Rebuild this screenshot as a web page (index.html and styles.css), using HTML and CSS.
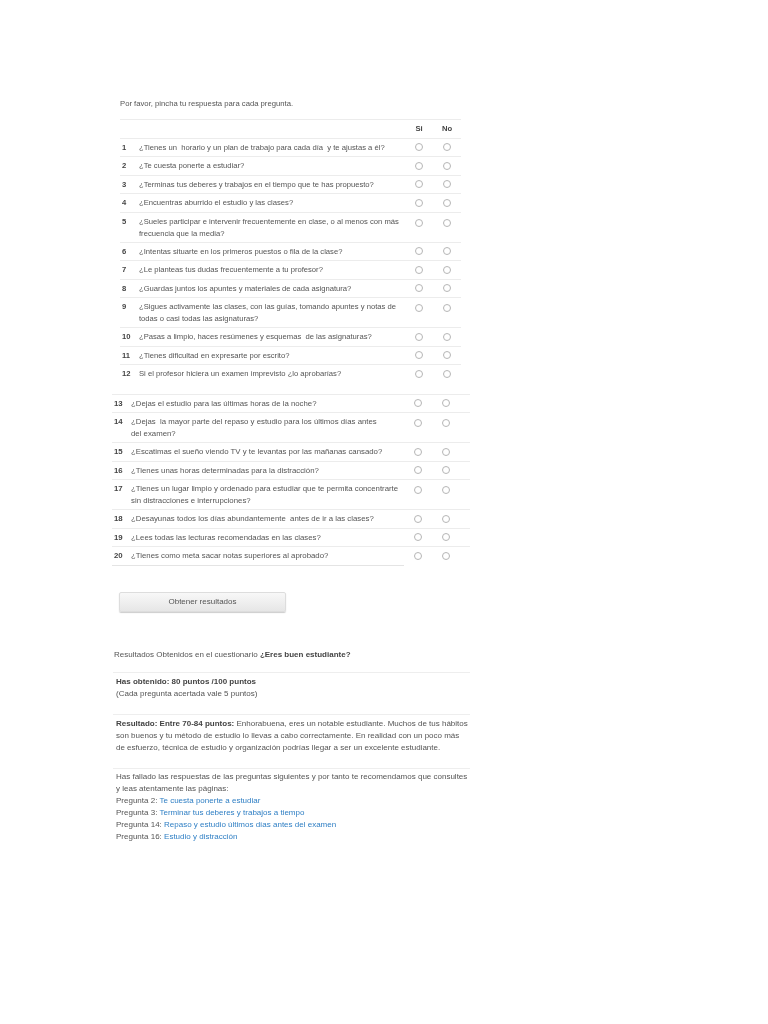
FILE: index.html
```html
<!DOCTYPE html>
<html>

<head>
    <title>Eres buen estudiante</title>
    <link rel="stylesheet" href="styles.css">
</head>

<body>
    <div class="page">
        <p class="intro">Por favor, pincha tu respuesta para cada pregunta.</p>

        <table class="quiz quiz-one">
            <tr class="head"><td class="num"></td><td class="q"></td><td class="opt">Si</td><td class="opt">No</td></tr>
            <tr><td class="num">1</td><td class="q">¿Tienes un &nbsp;horario y un plan de trabajo para cada día &nbsp;y te ajustas a él?</td><td class="opt"><input type="radio" name="q1"></td><td class="opt"><input type="radio" name="q1"></td></tr>
            <tr><td class="num">2</td><td class="q">¿Te cuesta ponerte a estudiar?</td><td class="opt"><input type="radio" name="q2"></td><td class="opt"><input type="radio" name="q2"></td></tr>
            <tr><td class="num">3</td><td class="q">¿Terminas tus deberes y trabajos en el tiempo que te has propuesto?</td><td class="opt"><input type="radio" name="q3"></td><td class="opt"><input type="radio" name="q3"></td></tr>
            <tr><td class="num">4</td><td class="q">¿Encuentras aburrido el estudio y las clases?</td><td class="opt"><input type="radio" name="q4"></td><td class="opt"><input type="radio" name="q4"></td></tr>
            <tr class="tall"><td class="num">5</td><td class="q">¿Sueles participar e intervenir frecuentemente en clase, o al menos con más<br>frecuencia que la media?</td><td class="opt"><input type="radio" name="q5"></td><td class="opt"><input type="radio" name="q5"></td></tr>
            <tr><td class="num">6</td><td class="q">¿Intentas situarte en los primeros puestos o fila de la clase?</td><td class="opt"><input type="radio" name="q6"></td><td class="opt"><input type="radio" name="q6"></td></tr>
            <tr><td class="num">7</td><td class="q">¿Le planteas tus dudas frecuentemente a tu profesor?</td><td class="opt"><input type="radio" name="q7"></td><td class="opt"><input type="radio" name="q7"></td></tr>
            <tr><td class="num">8</td><td class="q">¿Guardas juntos los apuntes y materiales de cada asignatura?</td><td class="opt"><input type="radio" name="q8"></td><td class="opt"><input type="radio" name="q8"></td></tr>
            <tr class="tall"><td class="num">9</td><td class="q">¿Sigues activamente las clases, con las guías, tomando apuntes y notas de<br>todas o casi todas las asignaturas?</td><td class="opt"><input type="radio" name="q9"></td><td class="opt"><input type="radio" name="q9"></td></tr>
            <tr><td class="num">10</td><td class="q">¿Pasas a limpio, haces resúmenes y esquemas &nbsp;de las asignaturas?</td><td class="opt"><input type="radio" name="q10"></td><td class="opt"><input type="radio" name="q10"></td></tr>
            <tr><td class="num">11</td><td class="q">¿Tienes dificultad en expresarte por escrito?</td><td class="opt"><input type="radio" name="q11"></td><td class="opt"><input type="radio" name="q11"></td></tr>
            <tr><td class="num">12</td><td class="q">Si el profesor hiciera un examen imprevisto ¿lo aprobarías?</td><td class="opt"><input type="radio" name="q12"></td><td class="opt"><input type="radio" name="q12"></td></tr>
        </table>

        <table class="quiz quiz-two">
            <tr><td class="num">13</td><td class="q">¿Dejas el estudio para las últimas horas de la noche?</td><td class="opt"><input type="radio" name="q13"></td><td class="opt"><input type="radio" name="q13"></td></tr>
            <tr class="tall"><td class="num">14</td><td class="q">¿Dejas &nbsp;la mayor parte del repaso y estudio para los últimos días antes<br>del examen?</td><td class="opt"><input type="radio" name="q14"></td><td class="opt"><input type="radio" name="q14"></td></tr>
            <tr><td class="num">15</td><td class="q">¿Escatimas el sueño viendo TV y te levantas por las mañanas cansado?</td><td class="opt"><input type="radio" name="q15"></td><td class="opt"><input type="radio" name="q15"></td></tr>
            <tr><td class="num">16</td><td class="q">¿Tienes unas horas determinadas para la distracción?</td><td class="opt"><input type="radio" name="q16"></td><td class="opt"><input type="radio" name="q16"></td></tr>
            <tr class="tall"><td class="num">17</td><td class="q">¿Tienes un lugar limpio y ordenado para estudiar que te permita concentrarte<br>sin distracciones e interrupciones?</td><td class="opt"><input type="radio" name="q17"></td><td class="opt"><input type="radio" name="q17"></td></tr>
            <tr><td class="num">18</td><td class="q">¿Desayunas todos los días abundantemente &nbsp;antes de ir a las clases?</td><td class="opt"><input type="radio" name="q18"></td><td class="opt"><input type="radio" name="q18"></td></tr>
            <tr><td class="num">19</td><td class="q">¿Lees todas las lecturas recomendadas en las clases?</td><td class="opt"><input type="radio" name="q19"></td><td class="opt"><input type="radio" name="q19"></td></tr>
            <tr class="last"><td class="num">20</td><td class="q">¿Tienes como meta sacar notas superiores al aprobado?</td><td class="opt"><input type="radio" name="q20"></td><td class="opt"><input type="radio" name="q20"></td></tr>
        </table>

        <button class="btn" type="button">Obtener resultados</button>

        <div class="results">
            <p class="results-title">Resultados Obtenidos en el cuestionario <b>¿Eres buen estudiante?</b></p>
            <div class="block block-score">
                <b>Has obtenido: 80 puntos /100 puntos</b><br>
                (Cada pregunta acertada vale 5 puntos)
            </div>
            <div class="block block-text">
                <b>Resultado: Entre 70-84 puntos:</b> Enhorabuena, eres un notable estudiante. Muchos de tus hábitos<br>
                son buenos y tu método de estudio lo llevas a cabo correctamente. En realidad con un poco más<br>
                de esfuerzo, técnica de estudio y organización podrías llegar a ser un excelente estudiante.
            </div>
            <div class="block block-links">
                Has fallado las respuestas de las preguntas siguientes y por tanto te recomendamos que consultes<br>
                y leas atentamente las páginas:<br>
                Pregunta 2: <a href="#">Te cuesta ponerte a estudiar</a><br>
                Pregunta 3: <a href="#">Terminar tus deberes y trabajos a tiempo</a><br>
                Pregunta 14: <a href="#">Repaso y estudio últimos días antes del examen</a><br>
                Pregunta 16: <a href="#">Estudio y distracción</a>
            </div>
        </div>
    </div>
</body>

</html>
```

FILE: styles.css
```css
body {
    margin: 0;
    background-color: #fff;
    color: #555;
    font-family: "Liberation Sans", Arial, sans-serif;
    font-size: 8px;
}

.page {
    padding-top: 98px;
    filter: blur(0.4px);
}

.intro {
    margin: 0 0 9px 120px;
    font-size: 7.7px;
    line-height: 12px;
}

.quiz {
    border-collapse: collapse;
    table-layout: fixed;
}

.quiz td {
    height: 17.5px;
    padding: 0;
    border-top: 1px solid #ececec;
    vertical-align: middle;
    white-space: nowrap;
}

.quiz .tall td {
    height: 26px;
    vertical-align: top;
    padding-top: 3px;
    line-height: 12px;
}

.quiz-one {
    width: 341px;
    margin-left: 120px;
    font-size: 7.65px;
}

.quiz-two {
    width: 358px;
    margin-top: 11px;
    margin-left: 112px;
    font-size: 7.8px;
}

.quiz .num {
    width: 17px;
    padding-left: 2px;
    font-weight: bold;
    color: #444;
}

.quiz-one .q {
    width: 266px;
}

.quiz-two .q {
    width: 273px;
}

.opt {
    width: 28px;
    text-align: center;
}

.quiz-two .opt:last-child {
    padding-right: 10px;
}

.head .opt {
    font-weight: bold;
    color: #444;
}

.opt input {
    appearance: none;
    box-sizing: border-box;
    display: block;
    width: 8px;
    height: 8px;
    margin: 0 auto;
    border: 1px solid #b5b5b5;
    border-radius: 50%;
    background: #fff;
}

.quiz .tall .opt input {
    margin-top: 3px;
}

.last .q,
.last .num {
    border-bottom: 1px solid #e4e4e4;
}

.btn {
    display: block;
    width: 167px;
    height: 20px;
    margin: 26px 0 0 119px;
    padding: 0;
    border: 1px solid #ddd;
    border-radius: 2px;
    background: linear-gradient(#f8f8f8, #e6e6e6);
    box-shadow: 0 1px 1px #ccc;
    color: #555;
    font-family: inherit;
    font-size: 8px;
}

.results {
    margin-left: 113px;
    width: 357px;
}

.results-title {
    margin: 37px 0 0 1px;
    line-height: 12px;
}

.results-title b {
    color: #444;
}

.block {
    padding-left: 3px;
    border-top: 1px solid #eee;
    line-height: 12px;
    white-space: nowrap;
}

.block b {
    color: #444;
}

.block-score {
    margin-top: 11px;
    padding-top: 3px;
    height: 38px;
}

.block-text {
    padding-top: 3px;
    height: 50px;
}

.block-links {
    padding-top: 2px;
}

a {
    color: #2f7fc4;
    text-decoration: none;
}
```
